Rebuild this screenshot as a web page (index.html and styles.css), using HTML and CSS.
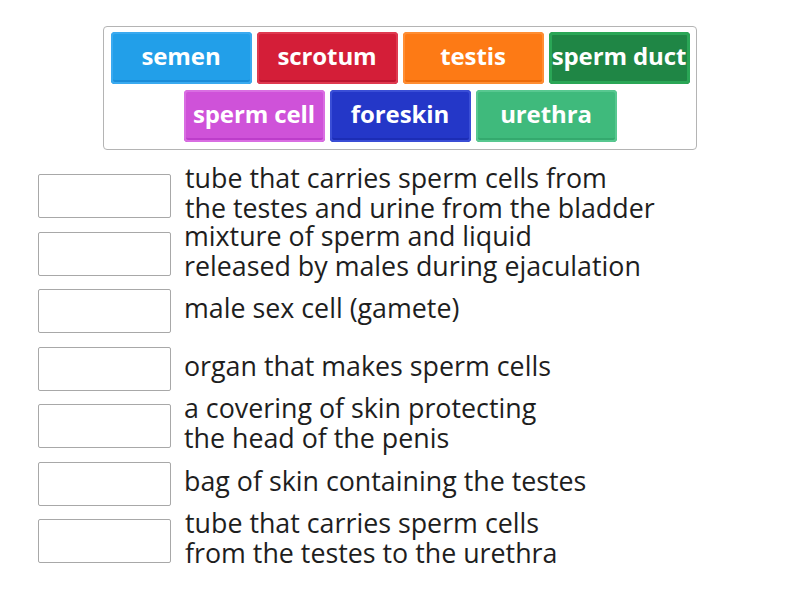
FILE: index.html
```html
<!DOCTYPE html>
<html>
<head>
<meta charset="utf-8">
<link rel="stylesheet" href="styles.css">
</head>
<body>
<div class="bank">
  <div class="tile blue">semen</div>
  <div class="tile red">scrotum</div>
  <div class="tile orange">testis</div>
  <div class="tile green">sperm duct</div>
  <div class="tile pink">sperm cell</div>
  <div class="tile navy">foreskin</div>
  <div class="tile mint">urethra</div>
</div>
<div class="rows">
  <div class="row"><div class="slot"></div><div class="desc shift">tube that carries sperm cells from<br>the testes and urine from the bladder</div></div>
  <div class="row"><div class="slot"></div><div class="desc">mixture of sperm and liquid<br>released by males during ejaculation</div></div>
  <div class="row"><div class="slot"></div><div class="desc">male sex cell (gamete)</div></div>
  <div class="row"><div class="slot"></div><div class="desc">organ that makes sperm cells</div></div>
  <div class="row"><div class="slot"></div><div class="desc">a covering of skin protecting<br>the head of the penis</div></div>
  <div class="row"><div class="slot"></div><div class="desc">bag of skin containing the testes</div></div>
  <div class="row"><div class="slot"></div><div class="desc shift">tube that carries sperm cells<br>from the testes to the urethra</div></div>
</div>
</body>
</html>
```
FILE: styles.css
```css
html, body {
  margin: 0;
  padding: 0;
  background: #fff;
  font-family: "Open Sans", "Liberation Sans", sans-serif;
}
.bank {
  box-sizing: border-box;
  width: 594px;
  margin: 26px 0 0 103px;
  border: 1px solid #b4b4b4;
  border-radius: 4px;
  padding: 6px 6px 6px 6px;
  display: flex;
  flex-wrap: wrap;
  justify-content: center;
  gap: 6px 5px;
}
.tile {
  box-sizing: border-box;
  width: 141px;
  height: 52px;
  margin-top: -1px;
  margin-bottom: 1px;
  border-radius: 4px;
  color: #fff;
  font-weight: 700;
  font-size: 24px;
  display: flex;
  align-items: center;
  justify-content: center;
  padding-bottom: 5px;
  white-space: nowrap;
  letter-spacing: -0.1px;
}
.blue { background: #229fe9; box-shadow: inset 0 0 0 2px #3aaaf0, inset 0 -4px 0 #1a8cd8; }
.red { background: #d41e38; box-shadow: inset 0 0 0 2px #df3a50, inset 0 -4px 0 #bd1530; }
.orange { background: #fd7a15; box-shadow: inset 0 0 0 2px #ff8e33, inset 0 -4px 0 #ec6c0b; }
.green { background: #1f8645; box-shadow: inset 0 0 0 3px #2aa656, inset 0 -5px 0 #1f8645; }
.pink { background: #cf52d9; box-shadow: inset 0 0 0 2px #d96ee2, inset 0 -4px 0 #bd3dcb; }
.navy { background: #2437c8; box-shadow: inset 0 0 0 2px #3a4ed6, inset 0 -4px 0 #1c2db5; }
.mint { background: #3fba7c; box-shadow: inset 0 0 0 2px #58c890, inset 0 -4px 0 #34a96e; }
.rows {
  margin: 24px 0 0 38px;
}
.row {
  display: flex;
  align-items: center;
  height: 44px;
  margin-bottom: 13.5px;
}
.slot {
  box-sizing: border-box;
  flex: none;
  width: 133px;
  height: 44px;
  border: 1px solid #a8a8a8;
  border-radius: 2px;
  background: #fff;
}
.desc {
  margin-left: 13px;
  font-size: 26.8px;
  line-height: 30px;
  color: #1e1e1e;
  white-space: nowrap;
  margin-top: -6px;
}
.desc.shift {
  margin-left: 14px;
}
```
